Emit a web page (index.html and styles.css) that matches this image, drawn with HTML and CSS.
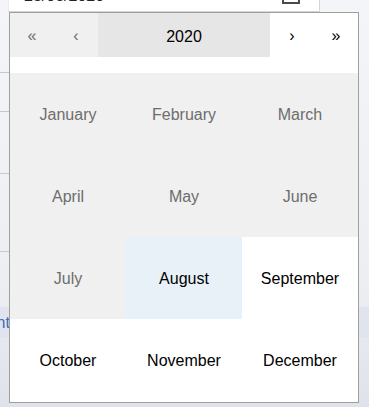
FILE: index.html
```html
<!DOCTYPE html>
<html>
<head>
<meta charset="utf-8">
<link rel="stylesheet" href="styles.css">
</head>
<body>
<div class="page">
  <div class="field">
    <div class="input">
      <span class="value">23/08/2020</span>
      <svg class="cal-icon" width="18" height="18" viewBox="0 0 18 18"><rect x="1" y="3" width="16" height="14" fill="none" stroke="#4a4a4a" stroke-width="2"/><line x1="1" y1="7" x2="17" y2="7" stroke="#4a4a4a" stroke-width="2"/></svg>
    </div>
    <div class="popup">
      <div class="nav">
        <button class="nav-btn" disabled>«</button>
        <button class="nav-btn" disabled>‹</button>
        <button class="nav-label">2020</button>
        <button class="nav-btn">›</button>
        <button class="nav-btn">»</button>
      </div>
      <div class="months">
        <button class="tile" disabled>January</button>
        <button class="tile" disabled>February</button>
        <button class="tile" disabled>March</button>
        <button class="tile" disabled>April</button>
        <button class="tile" disabled>May</button>
        <button class="tile" disabled>June</button>
        <button class="tile" disabled>July</button>
        <button class="tile active">August</button>
        <button class="tile">September</button>
        <button class="tile">October</button>
        <button class="tile">November</button>
        <button class="tile">December</button>
      </div>
    </div>
  </div>
  <div class="table">
    <div class="row r1"></div>
    <div class="row r2"></div>
    <div class="row r3"></div>
    <div class="row r4"></div>
    <div class="row r5"></div>
    <div class="band"><span class="band-text">Event</span></div>
  </div>
</div>
</body>
</html>
```
FILE: styles.css
```css
html, body {
  margin: 0;
  padding: 0;
}
body {
  width: 369px;
  height: 407px;
  overflow: hidden;
  background: linear-gradient(180deg, #f4f5f9 0%, #eceef4 70%, #dfe2ea 100%);
  font-family: "Liberation Sans", Arial, sans-serif;
}
.page {
  margin-top: -24px;
}
.field {
  position: relative;
  margin-left: 8px;
  width: 312px;
  z-index: 2;
}
.input {
  box-sizing: border-box;
  height: 36px;
  width: 312px;
  background: #ffffff;
  border: 1px solid #d4d4d4;
  border-top: none;
  border-left-color: #ececec;
  display: flex;
  align-items: center;
  justify-content: space-between;
  padding: 0 19px 0 15px;
  font-size: 16px;
  color: #222;
}
.value {
  margin-top: 4px;
}
.cal-icon {
  margin-top: 2px;
}
.popup {
  position: absolute;
  left: 1px;
  top: 36px;
  width: 348px;
  height: 389px;
  background: #ffffff;
  border: 1px solid #a0a096;
}
.nav {
  display: flex;
  height: 44px;
  margin-bottom: 16px;
}
button {
  font-family: "Liberation Sans", Arial, sans-serif;
  font-size: 16px;
  border: 0;
  margin: 0;
  outline: none;
  background: none;
  color: #000;
  cursor: pointer;
}
.nav-btn {
  width: 44px;
  min-width: 44px;
  background: #ffffff;
  padding: 2px 0 0;
}
.nav-btn:disabled {
  background: #f0f0f0;
  color: #6d6d6d;
}
.nav-label {
  flex: 1;
  background: #e6e6e6;
  padding: 3px 0 0;
}
.months {
  display: grid;
  grid-template-columns: repeat(3, 116px);
  grid-auto-rows: 82px;
}
.tile {
  padding: 33px 8px 31px;
  text-align: center;
  background: #ffffff;
  line-height: 18px;
}
.tile:disabled {
  background: #f0f0f0;
  color: #6d6d6d;
}
.tile.active {
  background: #e8f0f8;
}
.table {
  position: relative;
  z-index: 1;
}
.row {
  width: 320px;
  border-bottom: 1px solid #c6c9d0;
  box-sizing: border-box;
}
.r1 { height: 61px; }
.r2 { height: 39px; }
.r3 { height: 62px; }
.r4 { height: 78px; }
.r5 { height: 55px; border-bottom: none; }
.band {
  height: 31px;
  background: #dfe4ee;
  display: flex;
  align-items: center;
  margin-left: -31px;
  font-size: 16px;
  color: #3e6db5;
}
```
